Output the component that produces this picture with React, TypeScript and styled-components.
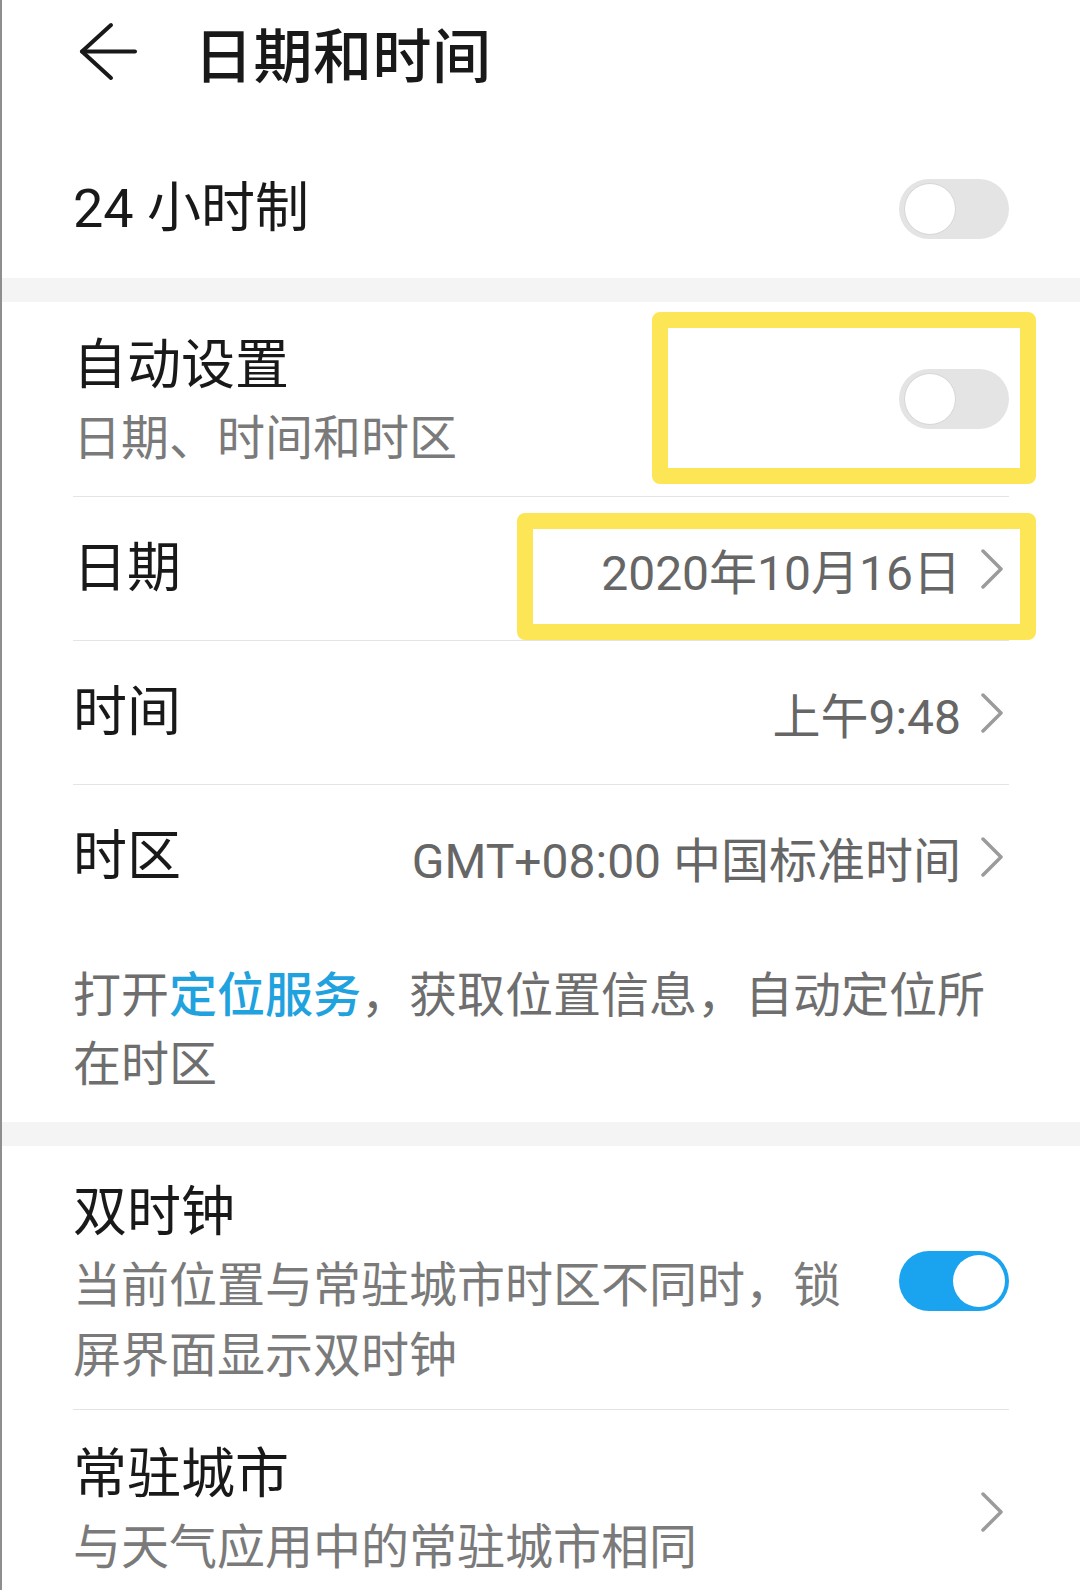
import styled, { createGlobalStyle } from "styled-components";

const GlobalStyle = createGlobalStyle`
  html, body {
    margin: 0;
    padding: 0;
    background: #ffffff;
  }
  body {
    font-family: Roboto, "Noto Sans CJK SC", sans-serif;
  }
`;

const Page = styled.div`
  width: 1080px;
  height: 1590px;
  box-sizing: border-box;
  border-left: 2px solid #8e8e8e;
  background: #ffffff;
  overflow: hidden;
  color: #191919;
`;

const Header = styled.header`
  height: 104px;
  display: flex;
  align-items: center;
  padding-left: 76px;
`;

const BackIcon = styled.svg`
  width: 60px;
  height: 60px;
  margin-right: 56px;
`;

const Title = styled.h1`
  margin: 0;
  font-size: 59px;
  font-weight: 500;
  letter-spacing: 0.5px;
  color: #191919;
`;

const Section = styled.section`
  padding: 0 71px 0 71px;
`;

const Band = styled.div`
  height: 24px;
  background: #f4f4f4;
`;

type ItemProps = {
  $height?: number;
  $padTop?: number;
  $padBottom?: number;
  $last?: boolean;
};

const Item = styled.div<ItemProps>`
  position: relative;
  display: flex;
  align-items: center;
  gap: 24px;
  box-sizing: border-box;
  min-height: ${(p) => p.$height ?? 144}px;
  padding-top: ${(p) => p.$padTop ?? 0}px;
  padding-bottom: ${(p) => p.$padBottom ?? 0}px;
  border-bottom: ${(p) => (p.$last ? "none" : "1px solid #e4e4e4")};
`;

const TextCol = styled.div`
  flex: 1;
  min-width: 0;
  display: flex;
  flex-direction: column;
`;

const Label = styled.div`
  font-size: 54px;
  line-height: 70px;
  color: #191919;
`;

const Sub = styled.div`
  font-size: 48px;
  line-height: 70px;
  color: #7a7a7a;
  margin-top: 3px;
`;

const Value = styled.div`
  display: flex;
  align-items: center;
  gap: 18px;
  font-size: 48px;
  color: #666666;
`;

const Chevron = styled.svg`
  width: 28px;
  height: 40px;
  flex: none;
  margin-right: 2px;
`;

const Track = styled.div<{ $on?: boolean }>`
  position: relative;
  flex: none;
  width: 110px;
  height: 60px;
  border-radius: 30px;
  background: ${(p) => (p.$on ? "#1aa3ee" : "#e4e4e4")};
`;

const Knob = styled.div<{ $on?: boolean }>`
  position: absolute;
  top: 4px;
  left: ${(p) => (p.$on ? "54px" : "5px")};
  width: 52px;
  height: 52px;
  box-sizing: border-box;
  border-radius: 50%;
  background: #ffffff;
  border: ${(p) => (p.$on ? "none" : "1.5px solid #d6d6d6")};
`;

const Highlight = styled.div<{ $left: number; $top: number; $bottom: number }>`
  position: absolute;
  left: ${(p) => p.$left}px;
  right: -27px;
  top: ${(p) => p.$top}px;
  bottom: ${(p) => p.$bottom}px;
  border: 16px solid #fde656;
  border-radius: 8px;
  pointer-events: none;
`;

const Info = styled.p`
  margin: 0;
  padding: 32px 0 23px;
  font-size: 48px;
  line-height: 69px;
  color: #6e6e6e;
`;

const Link = styled.span`
  color: #1fa2de;
  font-weight: 500;
`;

function Toggle({ on = false, lift = 0 }: { on?: boolean; lift?: number }) {
  return (
    <Track $on={on} style={lift ? { marginBottom: lift } : undefined}>
      <Knob $on={on} />
    </Track>
  );
}

function Arrow() {
  return (
    <Chevron viewBox="0 0 28 40">
      <polyline
        points="4,2 22,20 4,38"
        fill="none"
        stroke="#9b9b9b"
        strokeWidth="3.5"
        strokeLinecap="round"
        strokeLinejoin="round"
      />
    </Chevron>
  );
}

export default function App() {
  return (
    <Page>
      <GlobalStyle />
      <Header>
        <BackIcon viewBox="0 0 60 60">
          <g fill="none" stroke="#191919" strokeWidth="4" strokeLinecap="round" strokeLinejoin="round">
            <polyline points="33,3 4,29.5 33,56" />
            <line x1="4" y1="29.5" x2="57" y2="29.5" />
          </g>
        </BackIcon>
        <Title>日期和时间</Title>
      </Header>

      <Section>
        <Item $height={174} $padTop={35} $last>
          <TextCol>
            <Label>24 小时制</Label>
          </TextCol>
          <Toggle />
        </Item>
      </Section>

      <Band />

      <Section>
        <Item $height={194} $padTop={29} $padBottom={22}>
          <TextCol>
            <Label>自动设置</Label>
            <Sub>日期、时间和时区</Sub>
          </TextCol>
          <Toggle lift={8} />
          <Highlight $left={579} $top={10} $bottom={12} />
        </Item>
        <Item>
          <TextCol>
            <Label>日期</Label>
          </TextCol>
          <Value>
            2020年10月16日
            <Arrow />
          </Value>
          <Highlight $left={444} $top={16} $bottom={0} />
        </Item>
        <Item>
          <TextCol>
            <Label>时间</Label>
          </TextCol>
          <Value>
            上午9:48
            <Arrow />
          </Value>
        </Item>
        <Item $last>
          <TextCol>
            <Label>时区</Label>
          </TextCol>
          <Value>
            GMT+08:00 中国标准时间
            <Arrow />
          </Value>
        </Item>
        <Info>
          打开<Link>定位服务</Link>，获取位置信息，自动定位所在时区
        </Info>
      </Section>

      <Band />

      <Section>
        <Item $height={264} $padTop={32} $padBottom={18}>
          <TextCol>
            <Label>双时钟</Label>
            <Sub>当前位置与常驻城市时区不同时，锁屏界面显示双时钟</Sub>
          </TextCol>
          <Toggle on lift={8} />
        </Item>
        <Item $height={182} $padTop={29} $padBottom={8} $last>
          <TextCol>
            <Label>常驻城市</Label>
            <Sub>与天气应用中的常驻城市相同</Sub>
          </TextCol>
          <Arrow />
        </Item>
      </Section>
    </Page>
  );
}
